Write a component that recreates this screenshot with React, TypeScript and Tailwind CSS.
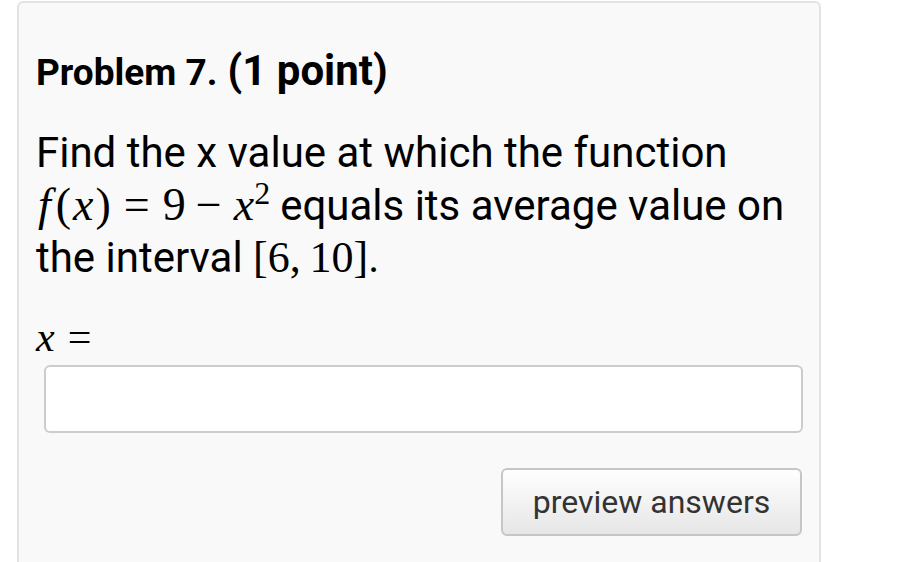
export default function App() {
  const serif = { fontFamily: '"Liberation Serif", "Times New Roman", serif' }
  return (
    <div className="min-h-[562px] w-[919px] bg-white pl-[17px] pt-px" style={{ fontFamily: 'Roboto, "Liberation Sans", sans-serif' }}>
      <div className="h-[600px] w-[804px] rounded-t-[6px] border-2 border-[#e3e3e3] bg-[#f9f9f9] px-[17px] pt-[47px] text-black">
        {/* Title */}
        <h1 className="flex items-baseline gap-[10px] leading-none">
          <span className="text-[37px] font-bold">Problem 7.</span>
          <span className="text-[42px] font-bold">(1 point)</span>
        </h1>

        {/* Question */}
        <p className="mt-[35px] text-[42px] leading-[52px]">
          Find the x value at which the function
          <br />
          <span style={serif} className="text-[46px]">
            <i className="pl-[2px] pr-[5px]">f</i>(<i className="px-[2px]">x</i>)<span className="mx-[13px]">=</span>9<span className="mx-[10px]">−</span><i className="pl-[2px]">x</i>
            <sup className="text-[32px]">2</sup>
          </span>
          <span className="ml-[10px]">equals its average value on</span>
          <br />
          the interval <span style={serif} className="text-[44px]">[6,&thinsp;10]</span>.
        </p>

        {/* Answer */}
        <div className="mt-[32px] text-[42px] leading-none" style={serif}>
          <i>x</i>
          <span className="ml-[13px]">=</span>
        </div>
        <div className="mt-[7px] ml-[8px] h-[68px] w-[759px] rounded-[6px] border-2 border-[#cccccc] bg-white" />

        <div className="mt-[35px] flex justify-end">
          <button className="h-[68px] w-[301px] rounded-[6px] border-2 border-[#c6c6c6] bg-gradient-to-b from-white to-[#e6e6e6] text-[32px] text-[#333]">
            preview answers
          </button>
        </div>
      </div>
    </div>
  )
}
